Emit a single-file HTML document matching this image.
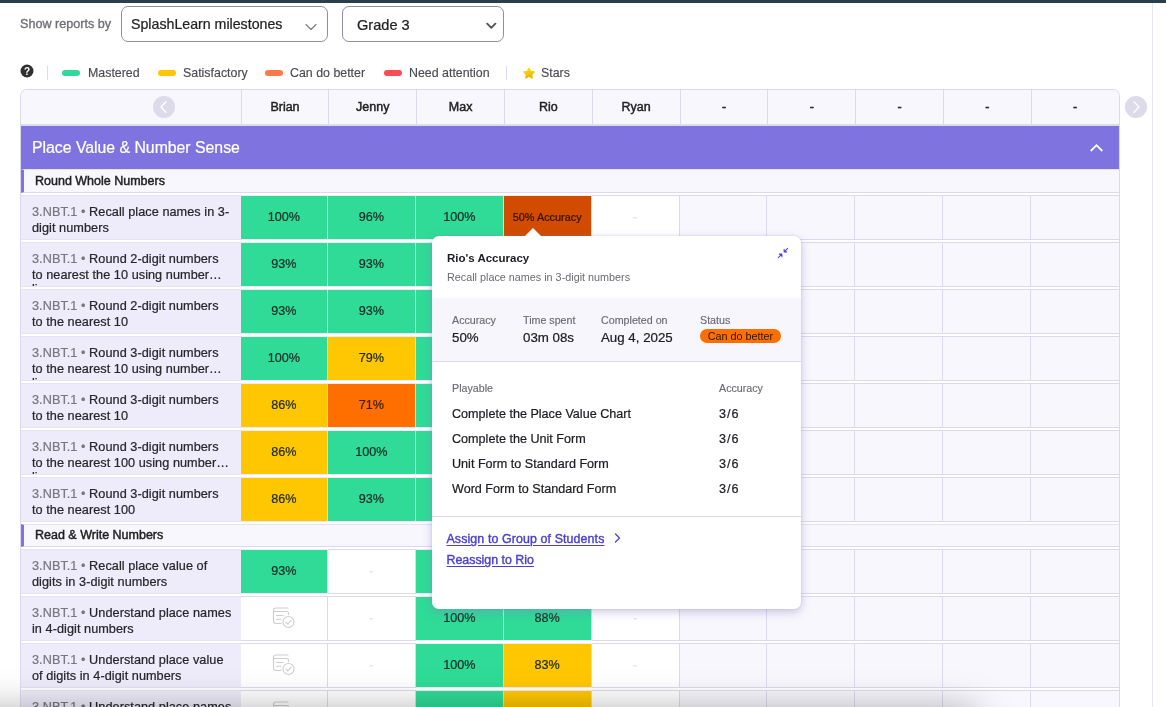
<!DOCTYPE html>
<html lang="en">
<head>
<meta charset="utf-8">
<title>Reports</title>
<style>
*{box-sizing:border-box;margin:0;padding:0}
html,body{width:1166px;height:707px;overflow:hidden;background:#fff}
body{position:relative;font-family:"Liberation Sans",Arial,sans-serif;color:#1f1f24;-webkit-font-smoothing:antialiased}
.topbar{position:absolute;left:0;top:0;width:1166px;height:3px;background:#2a3e4e}
.vline{position:absolute;left:1152px;top:3px;width:1px;height:704px;background:#e7e5f1}
.lbl{position:absolute;left:20px;top:16.400px;font-size:12.6px;line-height:16px;color:#6f6f78;font-weight:400;-webkit-text-stroke:.35px #6f6f78;letter-spacing:0;white-space:nowrap}
.sel{position:absolute;top:6px;height:36px;border:1px solid #8f8ca6;border-radius:7px;background:#fff;font-size:14.2px;line-height:34px;color:#222;white-space:nowrap}
.sel span{position:absolute;top:0}
.sel svg{position:absolute}
.s1{left:121px;width:207px}
.s1 span{left:9px}
.s2{left:342px;width:162px}
.s2 span{left:14px;top:1px;font-size:14.600px}
/* legend */
.legend{position:absolute;left:0;top:62px;width:700px;height:20px;font-size:12.4px;color:#4a4a52}
.legend>*{position:absolute}
.legend .t{top:3.300px;line-height:16px;white-space:nowrap}
.pill{top:8px;width:18px;height:6px;border-radius:3px}
.sep{top:4px;width:1px;height:14px;background:#dddaf0}
/* table */
.tbl{position:absolute;left:20px;top:89px;width:1100px;height:640px;border:1px solid #dcd9ee;border-bottom:0;border-radius:7px 7px 0 0;overflow:hidden;background:#fff}
.thead{position:absolute;left:0;top:0;width:1098px;height:36px;background:#f8f7fd;border-bottom:2px solid #dddbea;display:flex}
.thead .h0{width:219.600px;flex:none;position:relative}
.thead .h{width:87.8px;flex:none;border-left:1px solid #dcd9ee;text-align:center;font-size:12.500px;font-weight:400;-webkit-text-stroke:.45px #222;line-height:34px;color:#222}
.circ{position:absolute;width:22px;height:22px;border-radius:50%;background:#dddaea}
.band{position:absolute;left:0;top:36px;width:1098px;height:43px;background:#7f73e0;color:#fff;font-size:15.8px;line-height:44px;padding-left:11px;white-space:nowrap}
.sub{position:absolute;left:0;width:1098px;height:23px;background:#f8f7fd;border-top:1px solid #e4e2f1;border-bottom:1px solid #dcd9ee;border-left:3px solid #7f73e0;font-size:12.500px;font-weight:400;-webkit-text-stroke:.45px #222;line-height:21px;padding-left:11px;color:#222;white-space:nowrap}
.row{position:absolute;left:0;width:1098px;height:45px;display:flex}
.row>div{height:45px;border-top:1px solid #dcd9ee;border-bottom:1px solid #dcd9ee;flex:none}
.c0{width:220px;background:#eeecfa;font-size:12.7px;line-height:16px;padding:7.500px 0 0 11px;letter-spacing:.05px;color:#26262c;overflow:hidden;white-space:nowrap}
.c0 i{font-style:normal;color:#77777f}
.l3{position:relative;top:-1.300px}
.c{width:87.900px;border-right:1px solid #dcd9ee;text-align:center;font-size:12.6px;line-height:42.600px;color:#1c2a24;background:#f8f7fd;position:relative}
.row .c:nth-child(2){width:86.950px}
.row .c:last-child{width:87.850px;border-right:0}
.row .g,.row .y,.row .o,.row .od{border-top-color:#f0e9f8;border-bottom-color:#f0e9f8}
.row .c0{border-top-color:#e5e2f3;border-bottom-color:#e5e2f3}
.g{background:#2fdb97}
.y{background:#ffc702}
.o{background:#ff6f00;color:#3a2208}
.od{background:#d14b00;color:#2e1604}
.w{background:#fff;color:#e2e2ea}
.sm{font-size:10.900px}
.ic svg{position:absolute;left:31px;top:9px}

/* popup */
.pop{position:absolute;left:432px;top:236px;width:369px;height:373px;background:#fff;border-radius:7px;box-shadow:0 3px 10px rgba(130,122,190,.42),0 0 2px rgba(130,122,190,.25)}
.arrow{position:absolute;left:93px;top:-8px;width:0;height:0;border-left:8px solid transparent;border-right:8px solid transparent;border-bottom:8px solid #fff}
.pt{position:absolute;white-space:nowrap;line-height:16px}
.stats{position:absolute;left:0;top:62px;width:369px;height:64px;background:#f7f6fd;border-bottom:1px solid #dcd9ee}
.k{font-size:10.7px;color:#6a6a73}
.v{font-size:13.300px;color:#1c1c22}
.r{font-size:12.600px;color:#1c1c22}
.badge{position:absolute;left:268px;top:31px;width:81px;height:14px;border-radius:7px;background:#ff6f00;color:#2a1804;font-size:10.800px;line-height:14px;text-align:center;white-space:nowrap}
.hr{position:absolute;left:0;width:369px;height:1px;background:#dcd9ee}
.lk{font-size:12.400px;font-weight:400;-webkit-text-stroke:.4px #4b40d2;color:#4b40d2;text-decoration:underline;text-underline-offset:2px}
.bshadow{position:absolute;left:-60px;top:716px;width:1032px;height:60px;background:#888;box-shadow:0 0 38px 4px rgba(0,0,0,.36)}
#app{position:absolute;left:0;top:0;width:1166px;height:707px;overflow:hidden;will-change:transform}
.c0,.r,.v,.c,.sel span,.band{-webkit-text-stroke:.22px currentColor}
.legend .t,.k{-webkit-text-stroke:.15px currentColor}
</style>
</head>
<body>
<div id="app">
<div class="topbar"></div>
<div class="vline"></div>

<span class="lbl">Show reports by</span>
<div class="sel s1"><span>SplashLearn milestones</span>
<svg style="left:182.500px;top:15.500px" width="12" height="8" viewBox="0 0 12 8"><path d="M1 1.500 L6 6.500 L11 1.500" fill="none" stroke="#7c7a86" stroke-width="1.1" stroke-linecap="round" stroke-linejoin="round"/></svg></div>
<div class="sel s2"><span>Grade 3</span>
<svg style="left:142.500px;top:14.500px" width="12" height="8" viewBox="0 0 12 8"><path d="M1.200 1.700 L5.300 5.800 L9.400 1.700" fill="none" stroke="#55535c" stroke-width="1.900" stroke-linecap="round" stroke-linejoin="round"/></svg></div>

<div class="legend">
<svg style="left:20px;top:2px" width="14" height="14" viewBox="0 0 14 14"><circle cx="7" cy="7" r="6.500" fill="#303033"/><text x="7" y="10.6" text-anchor="middle" font-family="Liberation Sans, sans-serif" font-weight="700" font-size="10" fill="#fff">?</text></svg>
<div class="sep" style="left:47px"></div>
<div class="pill" style="left:62px;background:#30d998"></div><span class="t" style="left:88px">Mastered</span>
<div class="pill" style="left:158px;background:#ffc505"></div><span class="t" style="left:183px">Satisfactory</span>
<div class="pill" style="left:265px;background:#ff7a48"></div><span class="t" style="left:290px">Can do better</span>
<div class="pill" style="left:384px;background:#fb4b55"></div><span class="t" style="left:409px">Need attention</span>
<div class="sep" style="left:506px"></div>
<svg style="left:522px;top:4px" width="14" height="14" viewBox="0 0 24 24"><defs><linearGradient id="sg" x1="0" y1="0" x2="0.300" y2="1"><stop offset="0" stop-color="#ffe60a"/><stop offset="1" stop-color="#f0b20a"/></linearGradient></defs><path d="M12 3.800l2.600 5.600 6 .8-4.400 4.200 1.100 6-5.300-3-5.300 3 1.100-6-4.400-4.200 6-.8z" fill="url(#sg)" stroke="url(#sg)" stroke-width="2.600" stroke-linejoin="round"/></svg>
<span class="t" style="left:541px">Stars</span>
</div>

<div class="tbl">
<div class="thead">
<div class="h0"><div class="circ" style="left:132px;top:6px"><svg width="22" height="22" viewBox="0 0 22 22"><path d="M13 5.800 L8 11 L13 16.200" fill="none" stroke="#fff" stroke-width="1.4" stroke-linecap="round" stroke-linejoin="round"/></svg></div></div>
<div class="h">Brian</div><div class="h">Jenny</div><div class="h">Max</div><div class="h">Rio</div><div class="h">Ryan</div><div class="h">-</div><div class="h">-</div><div class="h">-</div><div class="h">-</div><div class="h">-</div>
</div>
<div class="band">Place Value &amp; Number Sense
<svg style="position:absolute;left:1068px;top:16.800px" width="15" height="10" viewBox="0 0 15 10"><path d="M1.700 8 L7.500 2.200 L13.300 8" fill="none" stroke="#fff" stroke-width="1.800" stroke-linecap="butt" stroke-linejoin="miter"/></svg></div>
<div class="sub" style="top:79px;height:24px;line-height:22px">Round Whole Numbers</div>
<div class="row" style="top:105px"><div class="c0"><i>3.NBT.1 •</i> Recall place names in 3-<br>digit numbers</div><div class="c g">100%</div><div class="c g">96%</div><div class="c g">100%</div><div class="c od sm">50% Accuracy</div><div class="c w">-</div><div class="c"></div><div class="c"></div><div class="c"></div><div class="c"></div><div class="c"></div></div>
<div class="row" style="top:152px"><div class="c0"><i>3.NBT.1 •</i> Round 2-digit numbers<br>to nearest the 10 using number…<br><span class="l3">line</span></div><div class="c g">93%</div><div class="c g">93%</div><div class="c g">100%</div><div class="c g">86%</div><div class="c w">-</div><div class="c"></div><div class="c"></div><div class="c"></div><div class="c"></div><div class="c"></div></div>
<div class="row" style="top:199px"><div class="c0"><i>3.NBT.1 •</i> Round 2-digit numbers<br>to the nearest 10</div><div class="c g">93%</div><div class="c g">93%</div><div class="c g">100%</div><div class="c g">93%</div><div class="c w">-</div><div class="c"></div><div class="c"></div><div class="c"></div><div class="c"></div><div class="c"></div></div>
<div class="row" style="top:246px"><div class="c0"><i>3.NBT.1 •</i> Round 3-digit numbers<br>to the nearest 10 using number…<br><span class="l3">line</span></div><div class="c g">100%</div><div class="c y">79%</div><div class="c g">100%</div><div class="c g">86%</div><div class="c w">-</div><div class="c"></div><div class="c"></div><div class="c"></div><div class="c"></div><div class="c"></div></div>
<div class="row" style="top:293px"><div class="c0"><i>3.NBT.1 •</i> Round 3-digit numbers<br>to the nearest 10</div><div class="c y">86%</div><div class="c o">71%</div><div class="c g">93%</div><div class="c g">93%</div><div class="c w">-</div><div class="c"></div><div class="c"></div><div class="c"></div><div class="c"></div><div class="c"></div></div>
<div class="row" style="top:340px"><div class="c0"><i>3.NBT.1 •</i> Round 3-digit numbers<br>to the nearest 100 using number…<br><span class="l3">line</span></div><div class="c y">86%</div><div class="c g">100%</div><div class="c g">100%</div><div class="c g">93%</div><div class="c w">-</div><div class="c"></div><div class="c"></div><div class="c"></div><div class="c"></div><div class="c"></div></div>
<div class="row" style="top:387px"><div class="c0"><i>3.NBT.1 •</i> Round 3-digit numbers<br>to the nearest 100</div><div class="c y">86%</div><div class="c g">93%</div><div class="c g">100%</div><div class="c g">93%</div><div class="c w">-</div><div class="c"></div><div class="c"></div><div class="c"></div><div class="c"></div><div class="c"></div></div>
<div class="sub" style="top:434px">Read &amp; Write Numbers</div>
<div class="row" style="top:459px"><div class="c0" style="line-height:16.900px"><i>3.NBT.1 •</i> Recall place value of<br>digits in 3-digit numbers</div><div class="c g">93%</div><div class="c w">-</div><div class="c g">100%</div><div class="c g">93%</div><div class="c w">-</div><div class="c"></div><div class="c"></div><div class="c"></div><div class="c"></div><div class="c"></div></div>
<div class="row" style="top:506px"><div class="c0" style="line-height:16.900px"><i>3.NBT.1 •</i> Understand place names<br>in 4-digit numbers</div><div class="c w ic"><svg width="24" height="24" viewBox="0 0 24 24" fill="none" stroke="#cdcdd2" stroke-width="1.1" stroke-linecap="round" stroke-linejoin="round"><path d="M16 2H4a2.500 2.500 0 0 0-2.500 2.500V15a2.500 2.500 0 0 0 2.500 2.500h5"/><path d="M1.500 5.500h13a2 2 0 0 1 2 2v1"/><path d="M4.500 9.500H11M4.500 13.300H9"/><circle cx="16.500" cy="16" r="5.500"/><path d="M14 16.200l1.800 1.800 3.300-3.600"/></svg></div><div class="c w">-</div><div class="c g">100%</div><div class="c g">88%</div><div class="c w">-</div><div class="c"></div><div class="c"></div><div class="c"></div><div class="c"></div><div class="c"></div></div>
<div class="row" style="top:553px"><div class="c0" style="line-height:16.900px"><i>3.NBT.1 •</i> Understand place value<br>of digits in 4-digit numbers</div><div class="c w ic"><svg width="24" height="24" viewBox="0 0 24 24" fill="none" stroke="#cdcdd2" stroke-width="1.1" stroke-linecap="round" stroke-linejoin="round"><path d="M16 2H4a2.500 2.500 0 0 0-2.500 2.500V15a2.500 2.500 0 0 0 2.500 2.500h5"/><path d="M1.500 5.500h13a2 2 0 0 1 2 2v1"/><path d="M4.500 9.500H11M4.500 13.300H9"/><circle cx="16.500" cy="16" r="5.500"/><path d="M14 16.200l1.800 1.800 3.300-3.600"/></svg></div><div class="c w">-</div><div class="c g">100%</div><div class="c y">83%</div><div class="c w">-</div><div class="c"></div><div class="c"></div><div class="c"></div><div class="c"></div><div class="c"></div></div>
<div class="row" style="top:600px"><div class="c0" style="line-height:16.900px"><i>3.NBT.1 •</i> Understand place names<br>in 5-digit numbers</div><div class="c w ic"><svg width="24" height="24" viewBox="0 0 24 24" fill="none" stroke="#cdcdd2" stroke-width="1.1" stroke-linecap="round" stroke-linejoin="round"><path d="M16 2H4a2.500 2.500 0 0 0-2.500 2.500V15a2.500 2.500 0 0 0 2.500 2.500h5"/><path d="M1.500 5.500h13a2 2 0 0 1 2 2v1"/><path d="M4.500 9.500H11M4.500 13.300H9"/><circle cx="16.500" cy="16" r="5.500"/><path d="M14 16.200l1.800 1.800 3.300-3.600"/></svg></div><div class="c w">-</div><div class="c g">100%</div><div class="c y">83%</div><div class="c w">-</div><div class="c"></div><div class="c"></div><div class="c"></div><div class="c"></div><div class="c"></div></div>
<!--ROWSEND-->
</div>
<div class="circ" style="left:1125px;top:96px"><svg width="22" height="22" viewBox="0 0 22 22"><path d="M9 5.800 L14 11 L9 16.200" fill="none" stroke="#fff" stroke-width="1.4" stroke-linecap="round" stroke-linejoin="round"/></svg></div>
<div class="pop">
<div class="arrow"></div>
<div class="pt" style="left:15px;top:14px;font-size:11.5px;font-weight:700;color:#1c1c22">Rio's Accuracy</div>
<div class="pt" style="left:15px;top:33.300px;font-size:10.8px;color:#6a6a73">Recall place names in 3-digit numbers</div>
<svg style="position:absolute;left:345px;top:10.500px" width="12" height="12" viewBox="0 0 14 14" fill="none" stroke="#4b40d2" stroke-width="1.2" stroke-linecap="round" stroke-linejoin="round"><path d="M12.500 1.500 L8.300 5.700 M8.300 2.700 V5.700 H11.300"/><path d="M1.500 12.500 L5.700 8.300 M2.700 8.300 H5.700 V11.300"/></svg>
<div class="stats">
<div class="pt k" style="left:20px;top:14.300px">Accuracy</div><div class="pt v" style="left:20px;top:32.400px">50%</div>
<div class="pt k" style="left:91px;top:14.300px">Time spent</div><div class="pt v" style="left:91px;top:32.400px">03m 08s</div>
<div class="pt k" style="left:169px;top:14.300px">Completed on</div><div class="pt v" style="left:169px;top:32.400px">Aug 4, 2025</div>
<div class="pt k" style="left:268px;top:14.300px">Status</div><div class="badge">Can do better</div>
</div>
<div class="pt k" style="left:20px;top:144.300px">Playable</div><div class="pt k" style="left:287px;top:144.300px">Accuracy</div>
<div class="pt r" style="left:20px;top:170.100px">Complete the Place Value Chart</div><div class="pt r" style="left:287px;top:170.100px;letter-spacing:1px">3/6</div>
<div class="pt r" style="left:20px;top:195.100px">Complete the Unit Form</div><div class="pt r" style="left:287px;top:195.100px;letter-spacing:1px">3/6</div>
<div class="pt r" style="left:20px;top:220.100px">Unit Form to Standard Form</div><div class="pt r" style="left:287px;top:220.100px;letter-spacing:1px">3/6</div>
<div class="pt r" style="left:20px;top:245.100px">Word Form to Standard Form</div><div class="pt r" style="left:287px;top:245.100px;letter-spacing:1px">3/6</div>
<div class="hr" style="top:280px"></div>
<a class="pt lk" style="left:14.500px;top:295px;letter-spacing:.11px">Assign to Group of Students</a>
<svg style="position:absolute;left:180.500px;top:296px" width="10" height="12" viewBox="0 0 10 12" fill="none" stroke="#4b40d2" stroke-width="1.300" stroke-linecap="round" stroke-linejoin="round"><path d="M2.500 2 L6.500 6 L2.500 10"/></svg>
<a class="pt lk" style="left:14.500px;top:316px">Reassign to Rio</a>
</div>
<!--POPUPEND-->
<div class="bshadow"></div>
</div>
</body>
</html>
